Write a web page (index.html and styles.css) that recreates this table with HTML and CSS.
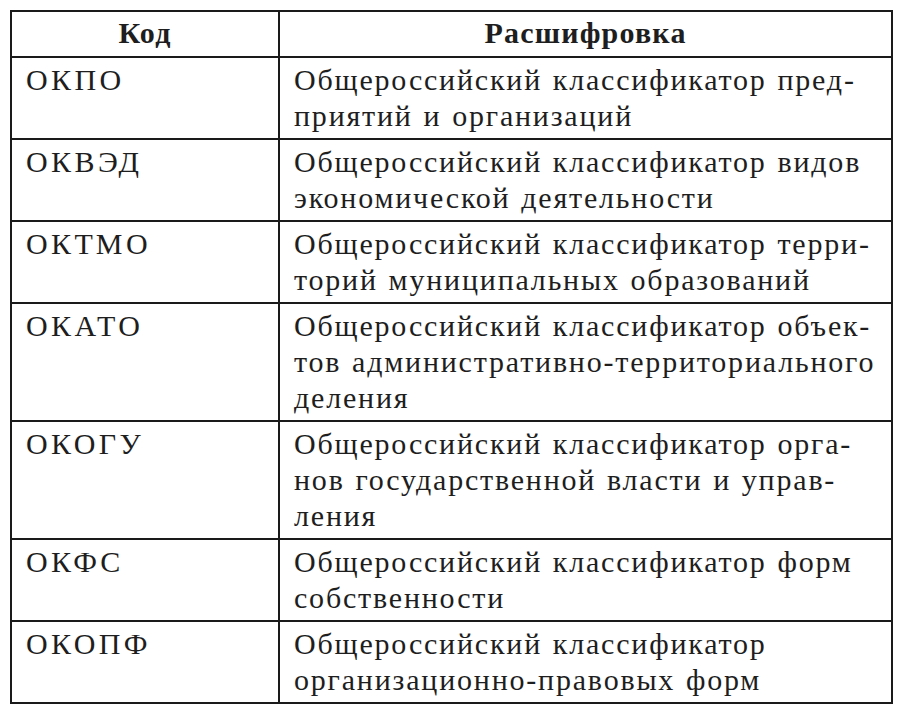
FILE: index.html
```html
<!DOCTYPE html>
<html lang="ru">
<head>
<meta charset="utf-8">
<title>Коды</title>
<link rel="stylesheet" href="styles.css">
</head>
<body>
<table class="codes">
  <thead>
    <tr><th class="c-code">Код</th><th class="c-desc">Расшифровка</th></tr>
  </thead>
  <tbody>
    <tr><td class="c-code">ОКПО</td><td class="c-desc">Общероссийский классификатор пред-<br>приятий и организаций</td></tr>
    <tr><td class="c-code">ОКВЭД</td><td class="c-desc">Общероссийский классификатор видов<br>экономической деятельности</td></tr>
    <tr><td class="c-code">ОКТМО</td><td class="c-desc">Общероссийский классификатор терри-<br>торий муниципальных образований</td></tr>
    <tr><td class="c-code">ОКАТО</td><td class="c-desc">Общероссийский классификатор объек-<br>тов административно-территориального<br>деления</td></tr>
    <tr><td class="c-code">ОКОГУ</td><td class="c-desc">Общероссийский классификатор орга-<br>нов государственной власти и управ-<br>ления</td></tr>
    <tr><td class="c-code">ОКФС</td><td class="c-desc">Общероссийский классификатор форм<br>собственности</td></tr>
    <tr><td class="c-code">ОКОПФ</td><td class="c-desc">Общероссийский классификатор<br>организационно-правовых форм</td></tr>
  </tbody>
</table>
</body>
</html>
```

FILE: styles.css
```css
html, body {
  margin: 0;
  padding: 0;
  background: #ffffff;
}
body {
  padding: 10px 0 0 10px;
  font-family: "Liberation Serif", "Times New Roman", serif;
  color: #1e1e1e;
}
.codes {
  border-collapse: collapse;
  width: 883px;
  table-layout: fixed;
}
.codes th,
.codes td {
  border: 2px solid #1a1a1a;
  white-space: nowrap;
  vertical-align: top;
}
.codes th {
  font-size: 30px;
  font-weight: bold;
  text-align: center;
  line-height: 36px;
  letter-spacing: 1.2px;
  padding: 3px 13px 5px;
}
.codes td {
  font-size: 30px;
  line-height: 36px;
  padding: 4px 13px 4px 14px;
  letter-spacing: 1.8px;
  word-spacing: 1.5px;
}
.codes td.c-code {
  letter-spacing: 3.4px;
}
.c-code {
  width: 240px;
}
```
